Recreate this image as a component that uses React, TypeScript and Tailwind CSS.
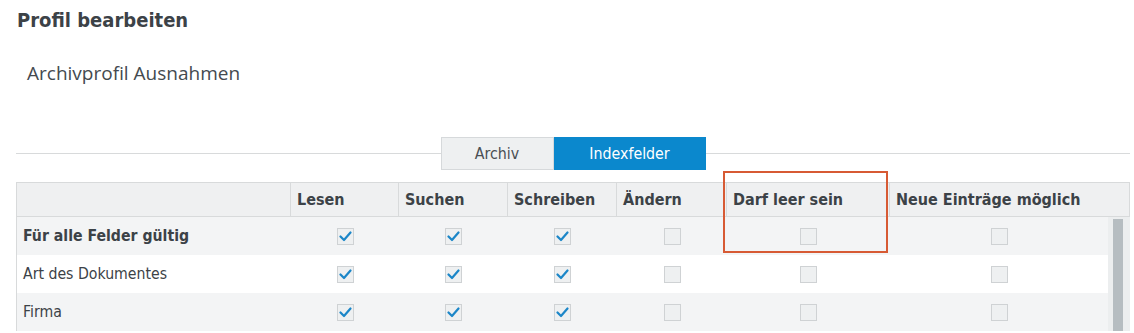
const FONT = "font-['DejaVu_Sans_Condensed','Open_Sans',sans-serif]";

const COLS = [
  { label: "Lesen", w: "w-[108px]" },
  { label: "Suchen", w: "w-[109px]" },
  { label: "Schreiben", w: "w-[109px]" },
  { label: "Ändern", w: "w-[110px]" },
  { label: "Darf leer sein", w: "w-[163px]" },
];

const ROWS = [
  { name: "Für alle Felder gültig", bold: true, checks: [true, true, true, false, false, false] },
  { name: "Art des Dokumentes", bold: false, checks: [true, true, true, false, false, false] },
  { name: "Firma", bold: false, checks: [true, true, true, false, false, false] },
];

const Box = ({ checked }: { checked: boolean }) => (
  <span className="w-[17px] h-[17px] border border-[#cfd2d4] bg-[#eef0f1] flex items-center justify-center">
    {checked && (
      <svg width="13" height="11" viewBox="0 0 13 11">
        <polyline points="1.5,5.5 5,9 11.5,1.5" fill="none" stroke="#1b86c8" strokeWidth="2.2" strokeLinecap="round" strokeLinejoin="round" />
      </svg>
    )}
  </span>
);

export default function App() {
  return (
    <div className={`${FONT} relative w-[1134px] h-[333px] overflow-hidden bg-white pl-[16px] pr-[4px] text-[#3c4247]`}>
      <h1 className="pt-[6px] text-[20px] font-bold leading-[28px] pl-[1px]">Profil bearbeiten</h1>
      <p className="mt-[26px] pl-[11px] text-[19px] leading-[26px] text-[#444a4f] font-['Open_Sans',sans-serif]">Archivprofil Ausnahmen</p>

      {/* tabs on a line */}
      <div className="mt-[51px] flex items-center">
        <div className="flex-1 h-px bg-[#d8dadb]" />
        <div className="flex h-[33px] text-[15.8px]">
          <div className="w-[113px] flex items-center justify-center bg-[#eef0f1] border border-[#d6d9db] text-[#4a4f54]">Archiv</div>
          <div className="w-[152px] flex items-center justify-center bg-[#0b88cd] text-white">Indexfelder</div>
        </div>
        <div className="flex-1 h-px bg-[#d8dadb]" />
      </div>

      {/* table */}
      <div className="mt-[12px] border-t border-l border-[#d8dadb]">
        <div className="flex h-[34px] bg-[#eff0f1] border-b border-[#d8dadb] text-[16px] font-bold">
          <div className="w-[274px] border-r border-[#d8dadb]" />
          {COLS.map((c) => (
            <div key={c.label} className={`${c.w} border-r border-[#d8dadb] flex items-center pl-[6px]`}>{c.label}</div>
          ))}
          <div className="flex-1 flex items-center pl-[6px] border-r border-[#d8dadb]">Neue Einträge möglich</div>
        </div>
        <div className="flex">
          <div className="flex-1">
            {ROWS.map((r, i) => (
              <div key={r.name} className={`flex h-[38px] items-center text-[15.7px] ${i % 2 === 0 ? "bg-[#f3f4f5]" : "bg-white"}`}>
                <div className={`w-[274px] pl-[6px] ${r.bold ? "font-bold" : ""}`}>{r.name}</div>
                {COLS.map((c, j) => (
                  <div key={c.label} className={`${c.w} flex justify-center`}>
                    <Box checked={r.checks[j]} />
                  </div>
                ))}
                <div className="w-[218px] flex justify-center">
                  <Box checked={r.checks[5]} />
                </div>
              </div>
            ))}
          </div>
          <div className="w-[22px] bg-[#eceeef] pt-[2px] pl-[5px]">
            <div className="w-[10px] h-full bg-[#b6bdc1]" />
          </div>
        </div>
      </div>

      {/* highlight frame */}
      <div className="absolute left-[723px] top-[171px] w-[165px] h-[82px] border-2 border-[#d75a34]" />
    </div>
  );
}
